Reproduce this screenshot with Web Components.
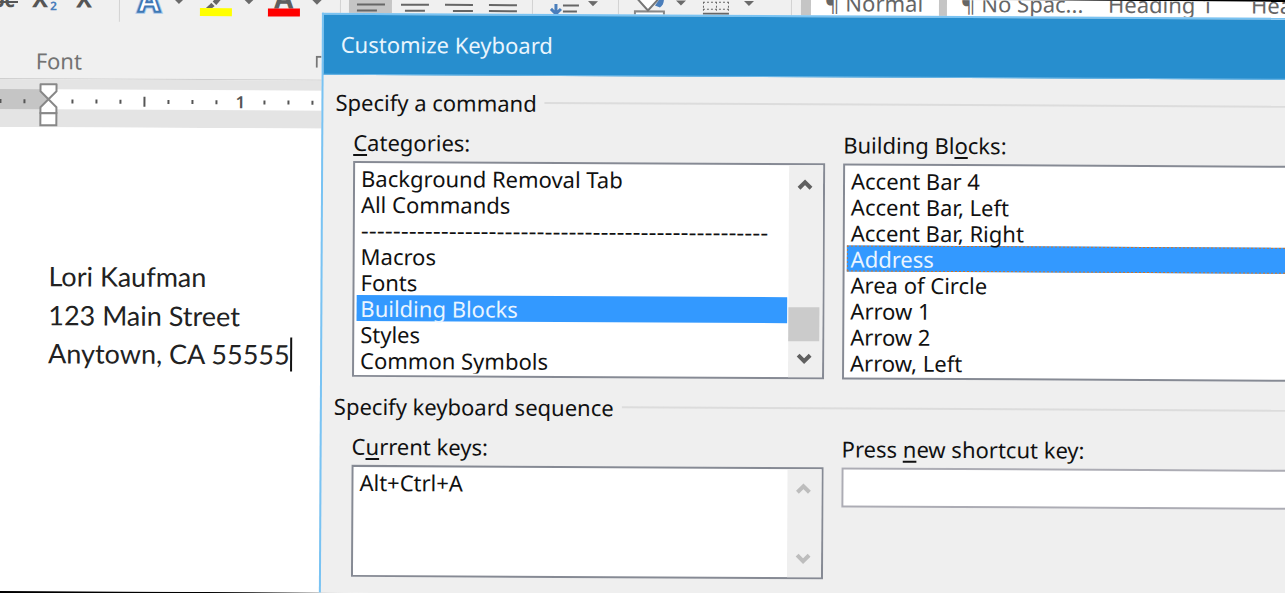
<!DOCTYPE html>
<html lang="en">
<head>
<meta charset="utf-8">
<title>Customize Keyboard</title>
<style>
  html, body { margin: 0; height: 100%; }
  body { background: #000; overflow: hidden; font-family: "Noto Sans", "Open Sans", sans-serif; }
</style>
</head>
<body>
<word-window>
  <word-ribbon slot="ribbon"></word-ribbon>
  <word-ruler slot="ruler"></word-ruler>
  <word-document slot="document">
    <span>Lori Kaufman</span>
    <span>123 Main Street</span>
    <span>Anytown, CA 55555</span>
  </word-document>
  <app-dialog slot="dialog" heading="Customize Keyboard">
    <dialog-section heading="Specify a command">
      <list-box scroll="on" items="Background Removal Tab|All Commands|---------------------------------------------------|Macros|Fonts|Building Blocks|Styles|Common Symbols" selected="5"><u>C</u>ategories:</list-box>
      <list-box focusrow items="Accent Bar 4|Accent Bar, Left|Accent Bar, Right|Address|Area of Circle|Arrow 1|Arrow 2|Arrow, Left" selected="3">Building Bl<u>o</u>cks:</list-box>
    </dialog-section>
    <dialog-section heading="Specify keyboard sequence">
      <list-box scroll="off" short items="Alt+Ctrl+A">C<u>u</u>rrent keys:</list-box>
      <key-input>Press <u>n</u>ew shortcut key:</key-input>
    </dialog-section>
  </app-dialog>
</word-window>

<script>
const define = (name, render) => customElements.define(name, class extends HTMLElement {
  constructor() { super(); this.attachShadow({ mode: "open" }); }
  connectedCallback() { this.shadowRoot.innerHTML = render(this); }
});

/* The window is tilted by a third of a degree over a black ground. */
define("word-window", () => `
  <style>
    :host { display: flex; flex-direction: column; position: relative; overflow: hidden;
            width: calc(100% + 8px); height: calc(100% + 3px); background: #fff;
            transform: rotate(0.3deg); transform-origin: 950px 0; }
    ::slotted([slot=document]) { flex: 1; }
    ::slotted([slot=dialog]) { position: absolute; left: 322px; top: 16px; right: 0; bottom: 0; }
  </style>
  <slot name="ribbon"></slot><slot name="ruler"></slot><slot name="document"></slot><slot name="dialog"></slot>`);

const tri = (x, y) => `<path d="M${x - 5} ${y}h10l-5 5z" fill="#6a6a6a"/>`;
const lines = (a, b) => `<path d="M${a[0]} 7.5H${a[1]}M${b[0]} 13.5H${b[1]}" stroke="#666" stroke-width="2"/>`;
const tool = (label, w, art, cls = "") =>
  `<button class="${cls}" aria-label="${label}"><svg width="${w}" height="24" viewBox="0 0 ${w} 24">${art}</svg></button>`;

define("word-ribbon", () => `
  <style>
    :host { display: block; height: 83px; background: #f0f0f0; border-bottom: 1px solid #cfcfcf; overflow: hidden; color: #666; }
    .bar { display: flex; height: 27px; align-items: flex-start; }
    button { border: 0; padding: 0; margin: 0; background: none; font: inherit; color: inherit; display: block; flex: none; }
    svg { display: block; }
    svg text { font-family: "Noto Sans", sans-serif; }
    .on { background: #c5c5c5; }
    i { flex: none; width: 1px; height: 26px; background: #d2d2d2; margin: 0 8px; }
    .styles { flex: 1; display: flex; min-width: 0; height: 24px; margin-left: 1px; background: #fff; border-left: 10px solid #c5c5c5; overflow: hidden; }
    .styles button { display: flex; gap: 6px; padding: 0 14px; height: 24px; line-height: 24px; font-size: 22px; margin-top: -9px; white-space: nowrap; }
    .styles .first { border-right: 8px solid #c5c5c5; width: 136px; height: 40px; box-sizing: border-box; }
    .styles .second { width: 147px; } .styles .third { width: 143px; }
    .foot { display: flex; justify-content: space-between; align-items: center; width: 322px; padding-left: 36px; margin-top: 24px; box-sizing: border-box; font-size: 22px; line-height: 28px; color: #737373; }
  </style>
  <div class="bar" role="toolbar">
    ${tool("Strikethrough", 24, `<text x="-20" y="12" font-size="20" font-weight="700" fill="#555">abc</text><path d="M0 7h18" stroke="#555" stroke-width="2"/>`)}
    ${tool("Subscript", 44, `<text x="8" y="12" font-size="24" font-weight="700" fill="#555">X</text><text x="26" y="15" font-size="12" font-weight="700" fill="#4a7ebb">2</text>`)}
    ${tool("Superscript", 43, `<text x="8" y="12" font-size="24" font-weight="700" fill="#555">X</text>`)}
    <i></i>
    ${tool("Text effects", 60, `<text x="10" y="16" font-size="32" font-weight="700" fill="#fff" stroke="#a9c9ec" stroke-width="4">A</text><text x="10" y="16" font-size="32" font-weight="700" fill="#fff" stroke="#3f78b5" stroke-width="2">A</text>${tri(51, 3)}`)}
    ${tool("Highlight colour", 72, `<path d="M18 12l4-4 8-8h6l-7 8-5 4z" fill="#666"/><path d="M23 5l6 6" stroke="#f0f0f0" stroke-width="2"/><path d="M12 12h32v8h-32z" fill="#ff0"/>${tri(61, 3)}`)}
    ${tool("Font colour", 72, `<text x="14" y="12" font-size="28" font-weight="700" fill="#5f5f5f">A</text><path d="M8 12h32v8H8z" fill="red"/>${tri(57, 3)}`)}
    <i></i>
    ${tool("Align left", 43, lines([8, 36], [8, 28]), "on")}
    ${tool("Centre", 44, lines([9, 37], [13, 33]))}
    ${tool("Align right", 44, lines([9, 37], [17, 37]))}
    ${tool("Justify", 44, lines([9, 37], [9, 37]))}
    <i></i>
    ${tool("Line spacing", 69, `<path d="M15 6v9M10 11l5 5 5-5" fill="none" stroke="#4a7ebb" stroke-width="3"/><path d="M22 7.5h16M22 13.5h14" stroke="#666" stroke-width="2"/>${tri(52, 3)}`)}
    <i></i>
    ${tool("Shading", 69, `<path d="M8 18v-5h29v5" fill="#fff" stroke="#888" stroke-width="2"/><path d="M10 0l11 12 11-12z" fill="#fff" stroke="#777" stroke-width="2"/><path d="M33 0h4c0 4-1 7-4 9l-5-2z" fill="#4a7ebb"/>${tri(54, 2)}`)}
    ${tool("Borders", 87, `<path d="M7 3.5h26M7 10.5h26M7.5 3v9M20.5 3v9M32.5 3v9" fill="none" stroke="#666" stroke-width="1" stroke-dasharray="2 2"/><path d="M7 15h26" stroke="#666" stroke-width="2"/>${tri(53, 2)}`)}
    <i></i>
    <div class="styles">
      <button class="first"><span>¶</span><span>Normal</span></button>
      <button class="second"><span>¶</span><span>No Spac...</span></button>
      <button class="third">Heading 1</button>
      <button>Heading 2</button>
    </div>
  </div>
  <div class="foot"><span>Font</span><svg width="6" height="12" viewBox="0 0 6 12"><path d="M1 12V1h5" fill="none" stroke="#777" stroke-width="2"/></svg></div>`);

const ticks = [0, 24, 72, 96, 120, 168, 192, 216, 264, 288, 312].map(x => `M${x} 20h2v4h-2z`).join("");
define("word-ruler", () => `
  <style>
    :host { display: block; height: 48px; background: #e4e4e4; }
    svg { display: block; }
    text { font: 600 17px "Noto Sans", sans-serif; }
  </style>
  <svg width="100%" height="48">
    <path d="M0 10h49v20H0z" fill="#c5c5c5"/><path d="M49 10h400v20H49z" fill="#fff"/>
    <path d="${ticks}M144 17h2v10h-2z" fill="#555"/>
    <text x="236" y="28" fill="#555">1</text>
    <path d="M41 5h16v7l-16 16v6h16v-6L41 12z" fill="#fff" stroke="#888" stroke-width="2" stroke-linejoin="round"/>
    <path d="M41 34h16v12H41z" fill="#fff" stroke="#888" stroke-width="2"/>
  </svg>`);

define("word-document", () => `
  <style>
    :host { display: flex; flex-direction: column; align-items: flex-start; background: #fff; color: #222;
            padding: 129px 0 0 50px; font: 27px/39px "Lato", sans-serif; }
    ::slotted(:last-of-type) { border-right: 2px solid #111; line-height: 34px; margin-top: 2px; }
  </style>
  <slot></slot>`);

define("app-dialog", el => `
  <style>
    :host { display: flex; flex-direction: column; box-sizing: border-box; background: #efefef; color: #111;
            border: solid #79c3f3; border-width: 2px 0 0 2px; }
    header { background: #278ece; border-bottom: 1px solid #6bb6e6; padding: 0 17px; }
    h1 { margin: 0; font-size: 22px; line-height: 59px; font-weight: 400; color: #e9f5fd; }
    main { display: flex; flex-direction: column; gap: 16px; padding: 14px 0 12px 12px; }
  </style>
  <header><h1>${el.getAttribute("heading")}</h1></header>
  <main><slot></slot></main>`);

define("dialog-section", el => `
  <style>
    :host { display: block; }
    .head { display: flex; align-items: center; gap: 8px; }
    h2 { margin: 0; font-size: 22px; line-height: 26px; font-weight: 400; }
    hr { flex: 1; margin: 0; border: 0; height: 2px; background: #dcdcdc; }
    .cols { display: grid; grid-template-columns: minmax(0, 472fr) minmax(0, 449fr); gap: 18px; padding: 14px 0 0 18px; align-items: start; }
  </style>
  <div class="head"><h2>${el.getAttribute("heading")}</h2><hr></div>
  <div class="cols"><slot></slot></div>`);

const labelCss = `label { display: block; font-size: 22px; line-height: 26px; margin-bottom: 6px; }
  ::slotted(u) { text-underline-offset: 3px; text-decoration-thickness: 2px; }`;

define("list-box", el => {
  const items = el.getAttribute("items").split("|"), sel = el.getAttribute("selected");
  const scroll = el.getAttribute("scroll");
  return `
  <style>
    :host { display: block; }
    ${labelCss}
    .box { display: flex; box-sizing: border-box; height: 216px; border: 2px solid #868a94; background: #fff; padding: 2px; }
    :host([short]) .box { height: 112px; }
    select { appearance: none; flex: 1; min-width: 0; display: block; margin: 0; padding: 0; border: 0; border-radius: 0; background: #fff;
             outline: 0; font: 22px/26px "Noto Sans", sans-serif; color: #111; overflow: hidden; height: 208px; scrollbar-width: none; }
    :host([short]) select { height: 104px; }
    option { display: flex; align-items: center; height: 26px; min-height: 26px; padding: 0 4px; box-sizing: border-box; color: #111; overflow: visible; }
    option.rule { font: 24px/26px "Liberation Sans", sans-serif; padding-top: 2px; }
    option:checked { background: #3399ff; color: #eaf5ff; }
    :host([focusrow]) option:checked {
      background:
        repeating-linear-gradient(90deg, #d07020 0 2px, #3399ff 2px 4px) 0 0 / 100% 1px no-repeat,
        repeating-linear-gradient(90deg, #d07020 0 2px, #3399ff 2px 4px) 0 100% / 100% 1px no-repeat,
        repeating-linear-gradient(#d07020 0 2px, #3399ff 2px 4px) 0 0 / 1px 100% no-repeat,
        #3399ff; }
    .bar { display: flex; flex-direction: column; align-items: center; width: 34px; margin: -2px -2px -2px 1px; background: #efefef; color: #606060; }
    .off { color: #bdbdbd; }
    .bar button { border: 0; background: none; padding: 0; width: 31px; height: 36px; margin-right: 3px; color: inherit; }
    .bar svg { display: block; margin: auto; }
    .bar button:first-child { padding-top: 2px; }
    .thumb { width: 31px; height: 34px; margin: auto 3px 0 0; background: #cbcbcb; }
    .off .thumb { visibility: hidden; }
  </style>
  <label for="s"><slot></slot></label>
  <div class="box">
    <select id="s" size="${el.hasAttribute("short") ? 4 : 8}">${items.map((t, i) =>
      `<option${t.startsWith("---") ? ' class="rule"' : ""}${String(i) === sel ? " selected" : ""}>${t}</option>`).join("")}</select>
    ${scroll ? `<div class="bar ${scroll}">
      <button aria-label="Scroll up"><svg width="16" height="12" viewBox="0 0 16 12"><path d="M2 10l6-6 6 6" fill="none" stroke="currentColor" stroke-width="4"/></svg></button>
      <div class="thumb"></div>
      <button aria-label="Scroll down"><svg width="16" height="12" viewBox="0 0 16 12"><path d="M2 2l6 6 6-6" fill="none" stroke="currentColor" stroke-width="4"/></svg></button>
    </div>` : ""}
  </div>`;
});

define("key-input", () => `
  <style>
    :host { display: block; }
    ${labelCss}
    input { display: block; box-sizing: border-box; width: 100%; height: 40px; margin: 0; padding: 0 6px; border: 2px solid #acacb4; border-radius: 0;
            background: #fff; font: 22px/26px "Noto Sans", sans-serif; outline: 0; }
  </style>
  <label for="k"><slot></slot></label>
  <input id="k" type="text">`);
</script>
</body>
</html>
